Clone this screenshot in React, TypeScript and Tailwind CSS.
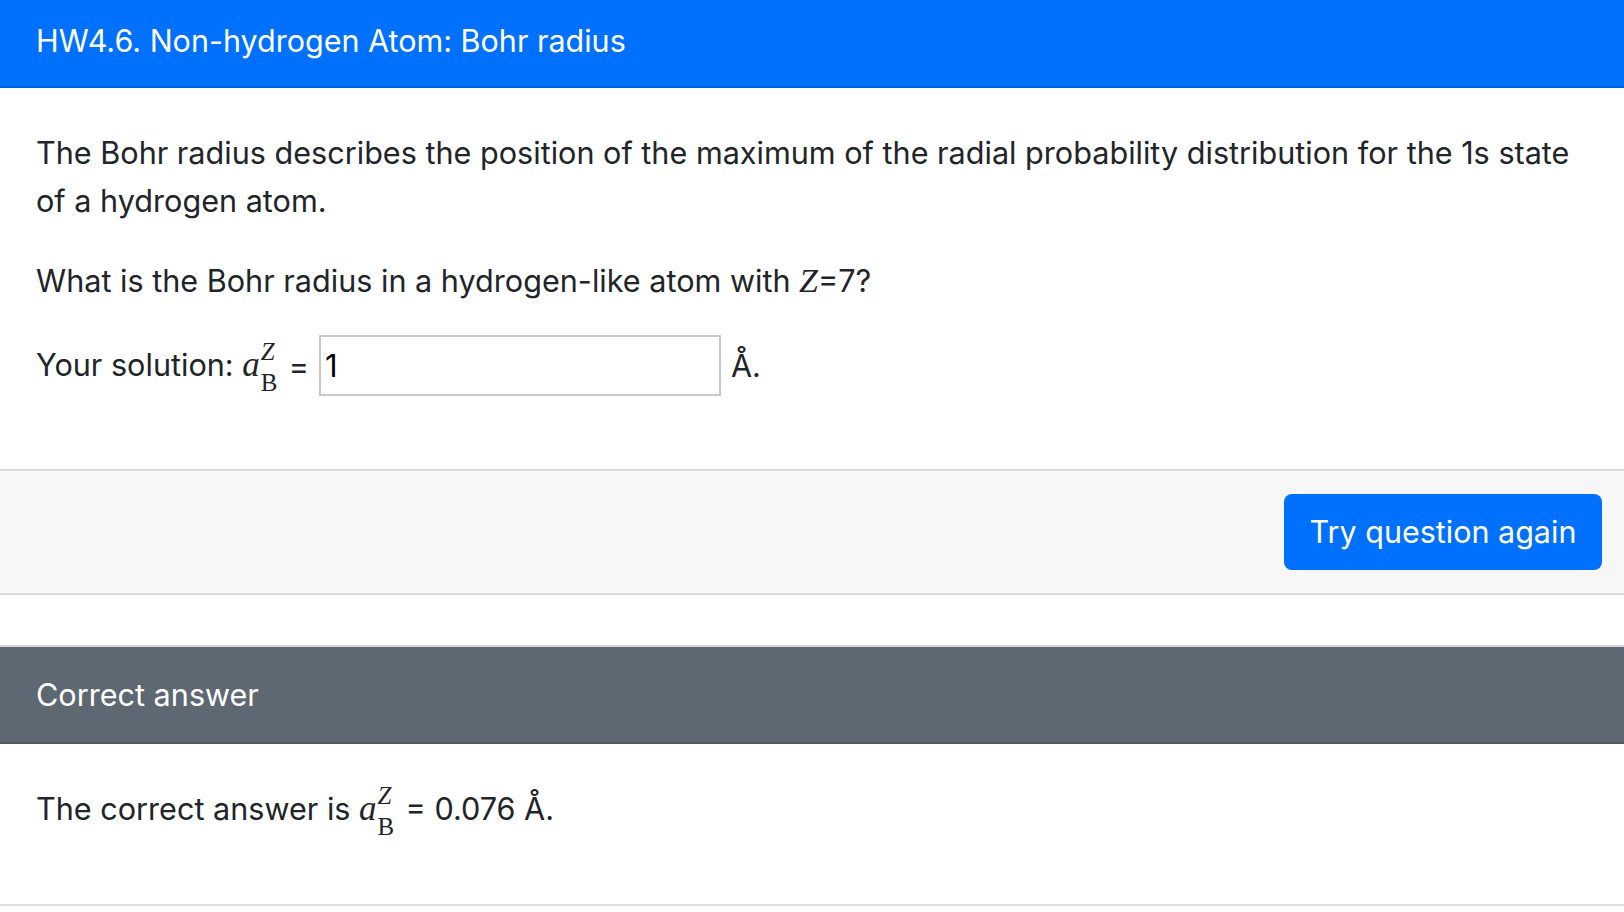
import React from "react";

function Aeff() {
  return (
    <span className="font-['Liberation_Serif',serif]">
      <span className="italic text-[35px]">a</span>
      <span className="relative inline-block w-[20px] h-[1px]">
        <span className="absolute left-[1px] bottom-[12px] italic text-[25px] leading-none">Z</span>
        <span className="absolute left-[1px] top-[-5px] text-[25px] leading-none">B</span>
      </span>
    </span>
  );
}

export default function App() {
  return (
    <div className="w-[1624px] h-[912px] overflow-hidden bg-white font-['Inter',sans-serif] text-[30.6px] leading-[48px] text-[#212529]">
      <div className="h-[88px] bg-[#0070ff] border-b-2 border-[#0062dd] px-[36px] pb-[4px] flex items-center text-white text-[30.5px]">
        HW4.6. Non-hydrogen Atom: Bohr radius
      </div>

      <div className="pl-[36px] pr-[40px] pt-[41px] pb-[73px]">
        <p>
          The Bohr radius describes the position of the maximum of the radial probability distribution for the 1s state
          of a hydrogen atom.
        </p>
        <p className="mt-[32px]">
          What is the Bohr radius in a hydrogen-like atom with{" "}
          <span className="font-['Liberation_Serif',serif] italic text-[34px]">Z</span>=7?
        </p>
        <div className="mt-[30px] flex items-center h-[61px]">
          <span>
            Your solution:&nbsp;
            <Aeff />
          </span>
          <span className="ml-[9px] mr-[10px]">=</span>
          <input
            readOnly
            value="1"
            className="h-[61px] w-[402px] border-2 border-[#c8c8c8] px-[4px] text-[31px] text-black outline-none"
          />
          <span className="ml-[10px]">Å.</span>
        </div>
      </div>

      <div className="h-[126px] bg-[#f7f7f7] border-y-2 border-[#dedede] flex items-center justify-end pr-[22px]">
        <button className="h-[76px] w-[318px] rounded-[8px] bg-[#0070ff] text-white text-[30.5px]">
          Try question again
        </button>
      </div>

      <div className="h-[50px]" />

      <div className="h-[99px] bg-[#5e6872] border-t-2 border-[#d9d9d9] border-b-2 border-b-[#4f5962] px-[36px] flex items-center text-white">
        Correct answer
      </div>
      <div className="h-[162px] border-b-2 border-[#dedede] px-[36px] pt-[41px]">
        <p>
          The correct answer is&nbsp;
          <Aeff />
          <span className="ml-[9px]">= 0.076 Å.</span>
        </p>
      </div>
    </div>
  );
}
